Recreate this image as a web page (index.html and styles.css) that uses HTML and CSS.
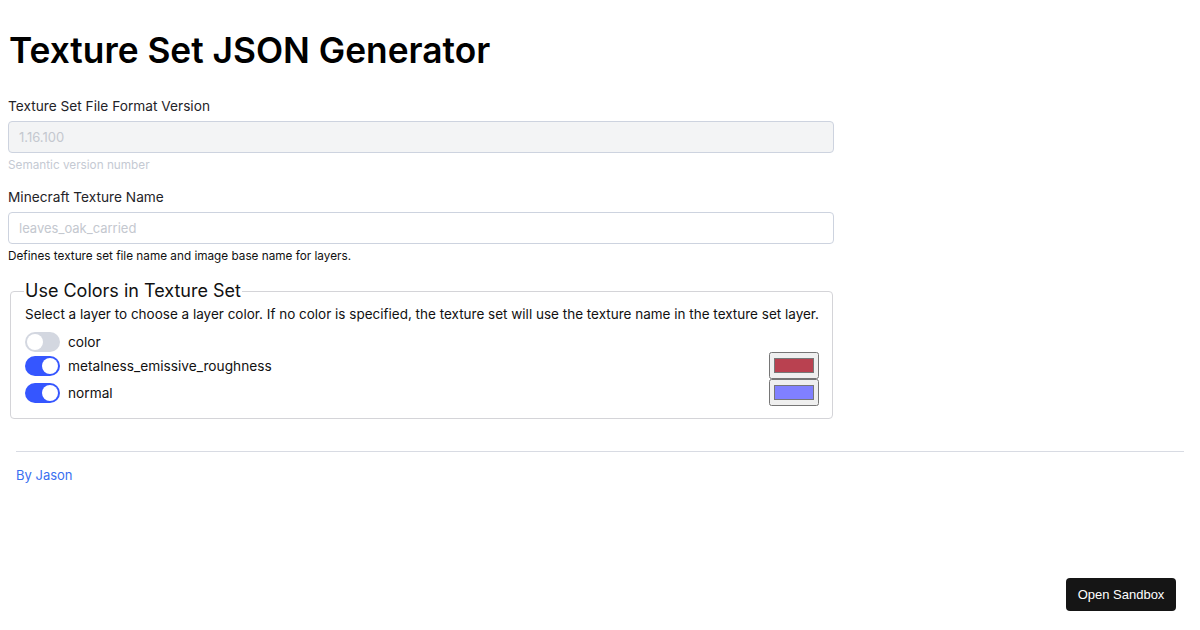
FILE: index.html
```html
<!DOCTYPE html>
<html>
<head>
<meta charset="utf-8">
<link rel="stylesheet" href="styles.css">
</head>
<body>
<main class="app">
  <h1 class="title">Texture Set JSON Generator</h1>
  <div class="field">
    <label class="label">Texture Set File Format Version</label>
    <input class="input" type="text" placeholder="1.16.100" disabled>
    <div class="help muted">Semantic version number</div>
  </div>
  <div class="field">
    <label class="label">Minecraft Texture Name</label>
    <input class="input" type="text" placeholder="leaves_oak_carried">
    <div class="help">Defines texture set file name and image base name for layers.</div>
  </div>
  <fieldset class="group">
    <legend class="legend">Use Colors in Texture Set</legend>
    <p class="desc">Select a layer to choose a layer color. If no color is specified, the texture set will use the texture name in the texture set layer.</p>
    <div class="row">
      <span class="toggle"><span class="knob"></span></span>
      <span class="row-label">color</span>
    </div>
    <div class="row">
      <span class="toggle on"><span class="knob"></span></span>
      <span class="row-label">metalness_emissive_roughness</span>
      <input class="swatch" type="color" value="#b94150">
    </div>
    <div class="row">
      <span class="toggle on"><span class="knob"></span></span>
      <span class="row-label">normal</span>
      <input class="swatch" type="color" value="#8080ff">
    </div>
  </fieldset>
</main>
<footer class="footer">
  <hr class="rule">
  <a class="credit" href="#">By Jason</a>
</footer>
<button class="sandbox">Open Sandbox</button>
</body>
</html>
```

FILE: styles.css
```css
body {
  margin: 8px;
  font-family: Inter, "Noto Sans", sans-serif;
  color: #111;
  background: #fff;
}
.app {
  width: 826px;
}
.title {
  font-size: 35.3px;
  font-weight: 600;
  line-height: 44px;
  margin: 21px 0 0 1px;
  color: #000;
}
.field {
  display: flex;
  flex-direction: column;
}
.field + .field {
  margin-top: 14px;
}
.title + .field {
  margin-top: 23px;
}
.label {
  font-size: 13.7px;
  line-height: 20px;
  color: #1f2328;
  margin-bottom: 5px;
}
.input {
  box-sizing: border-box;
  height: 32px;
  width: 826px;
  border: 1px solid #cdd3df;
  border-radius: 4px;
  padding: 0 10px;
  font-family: Inter, sans-serif;
  font-size: 13px;
  background: #fff;
}
.input::placeholder {
  color: #c4c8cf;
}
.input:disabled {
  background: #f3f4f5;
}
.help {
  font-size: 11.75px;
  line-height: 16px;
  margin-top: 4px;
  color: #111;
}
.help.muted {
  color: #c5cad3;
}
.group {
  margin: 17px 0 0 2px;
  width: 823px;
  box-sizing: border-box;
  border: 1px solid #d4d4d8;
  border-radius: 4px;
  padding: 0 13px 12px 14px;
}
.legend {
  font-size: 18px;
  line-height: 20px;
  padding: 0 1px;
  margin-left: -1px;
  color: #111;
}
.desc {
  font-size: 13.5px;
  line-height: 18px;
  margin: 4px 0 9px;
  color: #111;
  white-space: nowrap;
}
.row {
  display: flex;
  align-items: center;
  min-height: 20px;
  gap: 8px;
}
.row + .row {
  min-height: 27px;
}
.row-label {
  font-size: 13.7px;
  color: #111;
}
.toggle {
  box-sizing: border-box;
  width: 35px;
  height: 20px;
  border-radius: 10px;
  background: #d3d7e0;
  padding: 2px;
  display: flex;
}
.toggle.on {
  background: #3556ff;
  justify-content: flex-end;
}
.knob {
  width: 16px;
  height: 16px;
  border-radius: 50%;
  background: #fff;
}
.swatch {
  margin: 0 0 0 auto;
  width: 50px;
  height: 27px;
}
.footer {
  margin-top: 32px;
  padding: 0 8px;
}
.rule {
  border: 0;
  border-top: 1px solid #d8dbe3;
  margin: 0;
}
.credit {
  display: inline-block;
  margin-top: 15px;
  font-size: 13px;
  color: #3a6ff0;
  text-decoration: none;
}
.sandbox {
  position: fixed;
  right: 24px;
  bottom: 19px;
  width: 110px;
  height: 33px;
  background: #151515;
  color: #fff;
  border: 0;
  border-radius: 4px;
  font-family: "Liberation Sans", Arial, sans-serif;
  font-size: 13px;
}
```
